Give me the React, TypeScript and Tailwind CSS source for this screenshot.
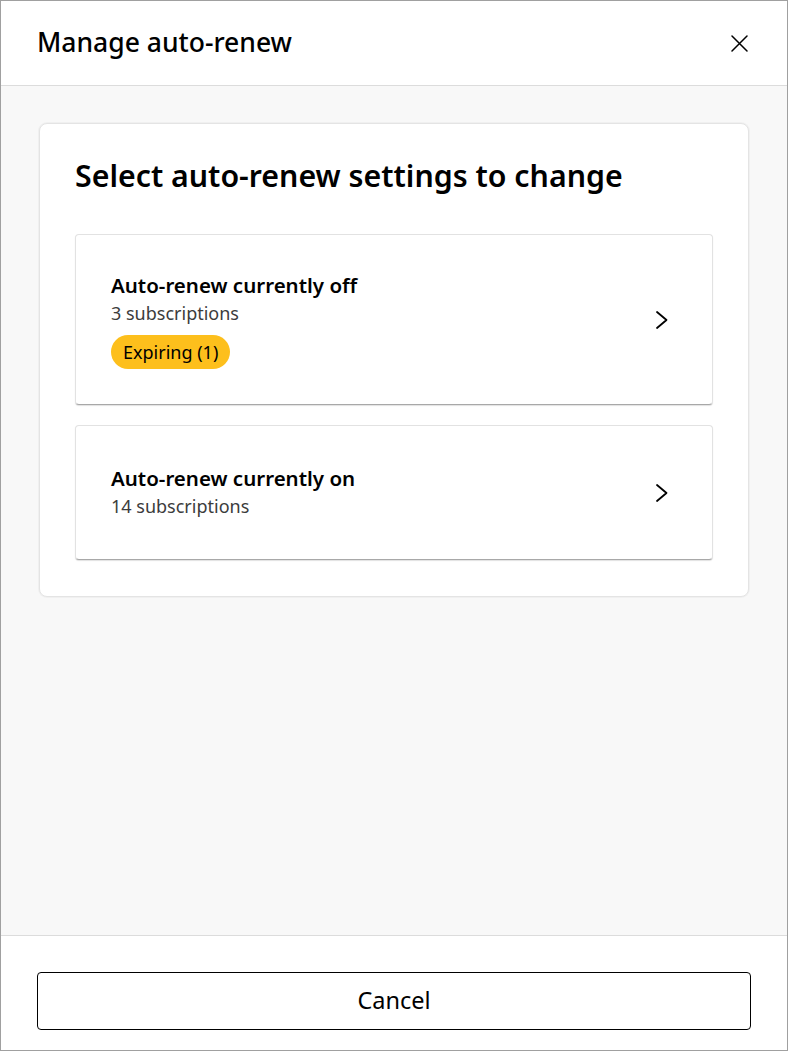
type Option = {
  title: string;
  count: string;
  badge?: string;
};

const options: Option[] = [
  { title: "Auto-renew currently off", count: "3 subscriptions", badge: "Expiring (1)" },
  { title: "Auto-renew currently on", count: "14 subscriptions" },
];

function Chevron() {
  return (
    <svg width="14" height="20" viewBox="0 0 14 20" fill="none" className="shrink-0">
      <path d="M2 2l9.5 8L2 18" stroke="#000" strokeWidth="1.8" strokeLinecap="round" strokeLinejoin="round" />
    </svg>
  );
}

function OptionCard({ title, count, badge }: Option) {
  return (
    <button
      type="button"
      className="flex w-full items-center justify-between rounded-[4px] border border-[#e2e2e2] border-b-[#a8a8a8] bg-white pl-[35px] pr-[43px] text-left shadow-[0_1px_1px_rgba(0,0,0,0.12)]"
    >
      <div className={badge ? "pb-[35px] pt-[37px]" : "pb-[41px] pt-[39px]"}>
        <p className="text-[20.5px] font-semibold leading-[26px] text-black">{title}</p>
        <p className="mt-[3px] text-[18px] leading-[24px] text-[#3c3c3c]">{count}</p>
        {badge && (
          <span className="mt-[10px] inline-flex h-[34px] items-center rounded-full bg-[#fdbf1c] px-[12px] text-[18px] text-black">
            {badge}
          </span>
        )}
      </div>
      <Chevron />
    </button>
  );
}

export default function App() {
  return (
    <div className="flex h-[1051px] w-[788px] flex-col border border-[#a0a0a0] bg-white font-['Noto_Sans',sans-serif]">
      <header className="flex h-[85px] shrink-0 items-center justify-between border-b border-[#dcdcdc] pl-[36px] pr-[39px]">
        <h1 className="text-[26.5px] font-medium text-black">Manage auto-renew</h1>
        <svg width="17" height="17" viewBox="0 0 17 17" fill="none">
          <path d="M1 1l15 15M16 1L1 16" stroke="#000" strokeWidth="1.5" strokeLinecap="round" />
        </svg>
      </header>

      <main className="flex-1 bg-[#f8f8f8] px-[38px] pt-[37px]">
        <section className="rounded-[8px] border border-[#e4e4e4] bg-white px-[35px] pb-[36px] pt-[32px] shadow-[0_0_0_1px_#f0f0f0]">
          <h2 className="text-[30.3px] font-semibold leading-[40px] text-black">
            Select auto-renew settings to change
          </h2>
          <div className="mt-[38px] flex flex-col gap-[20px]">
            {options.map((o) => (
              <OptionCard key={o.title} {...o} />
            ))}
          </div>
        </section>
      </main>

      <footer className="shrink-0 border-t border-[#dcdcdc] px-[36px] pb-[20px] pt-[36px]">
        <button
          type="button"
          className="flex h-[58px] w-full items-center justify-center rounded-[4px] border border-black text-[23.5px] text-black"
        >
          Cancel
        </button>
      </footer>
    </div>
  );
}
